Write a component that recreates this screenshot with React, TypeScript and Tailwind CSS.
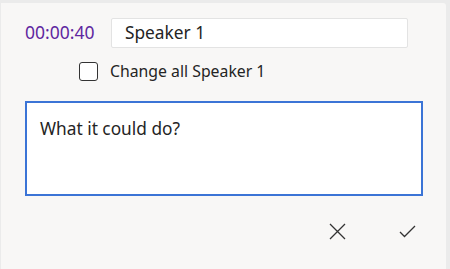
export default function App() {
  return (
    <div className="w-[450px] h-[269px] bg-[#ebebeb] pt-[3px] pl-[1px] pr-[4px] overflow-hidden" style={{ fontFamily: '"Noto Sans", "Open Sans", sans-serif' }}>
      <div className="h-[266px] bg-[#f8f7f6] rounded-tr-[3px] flex flex-col">
        <div className="flex items-center pt-[15px] pl-[24px]">
          <span className="w-[86px] text-[17.5px] text-[#5f27a0] leading-none">00:00:40</span>
          <div className="w-[297px] h-[30px] bg-white border border-[#e3e3e3] rounded-[2px] flex items-center pl-[13px] text-[17.3px] text-[#242424]">
            Speaker 1
          </div>
        </div>
        <div className="flex items-center pl-[78px] mt-[14px]">
          <span className="w-[19px] h-[19px] border-[1.5px] border-[#333] rounded-[3px] bg-white" />
          <span className="ml-[12px] text-[15.8px] text-[#242424] leading-none">Change all Speaker 1</span>
        </div>
        <div className="ml-[24px] mt-[20px] w-[398px] h-[95px] bg-white border-2 border-[#3b74d6] pl-[13px] pt-[17px] text-[17.3px] text-[#242424] leading-none">
          What it could do?
        </div>
        <div className="flex items-center mt-[27px] pl-[328px]">
          <svg width="17" height="17" viewBox="0 0 17 17" fill="none" stroke="#333" strokeWidth="1.3">
            <path d="M1 1 L16 16 M16 1 L1 16" />
          </svg>
          <svg className="ml-[53px]" width="17" height="13" viewBox="0 0 17 13" fill="none" stroke="#333" strokeWidth="1.3">
            <path d="M1 7 L5.5 11.5 L16 1" />
          </svg>
        </div>
      </div>
    </div>
  );
}
